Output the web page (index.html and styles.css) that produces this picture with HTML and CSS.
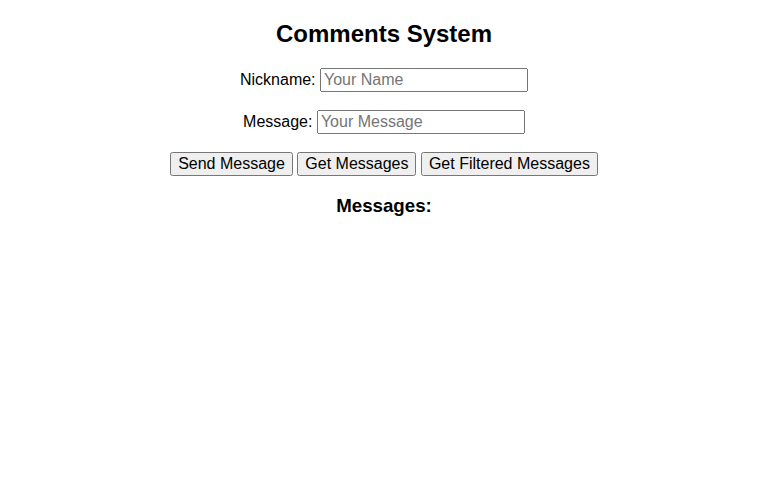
FILE: index.html
```html
<!DOCTYPE html>
<html lang="en">

<head>
    <meta charset="UTF-8">
    <meta name="viewport" content="width=device-width, initial-scale=1.0">
    <title>Comments System</title>
    <link rel="stylesheet" href="styles.css">
</head>

<body>
    <h2>Comments System</h2>

    <form class="comment-form" id="commentForm">
        <label for="nickname">Nickname:</label>
        <input type="text" id="nickname" name="nickname" placeholder="Your Name">
        <br><br>
        <label for="message">Message:</label>
        <input type="text" id="message" name="message" placeholder="Your Message">
        <br><br>
        <button type="button" id="sendBtn">Send Message</button>
        <button type="button" id="getBtn">Get Messages</button>
        <button type="button" id="filterBtn">Get Filtered Messages</button>
    </form>

    <h3>Messages:</h3>
    <div class="messages" id="messages"></div>
</body>

</html>
```

FILE: styles.css
```css
body {
    font-family: "Liberation Sans", Arial, sans-serif;
    font-size: 16px;
    color: #000;
    background-color: #fff;
    text-align: center;
    margin: 0 8px;
}

.comment-form input,
.comment-form button {
    font-family: inherit;
    font-size: 16px;
}

.comment-form input[type="text"] {
    width: 208px;
    height: 24px;
    box-sizing: border-box;
}

.comment-form button {
    height: 24px;
    box-sizing: border-box;
}

.messages {
    margin: 0 auto;
    max-width: 600px;
}
```
